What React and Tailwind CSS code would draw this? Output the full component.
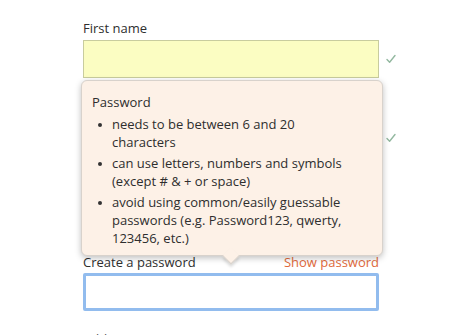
import React from "react";

function Check() {
  return (
    <svg width="12" height="12" viewBox="0 0 12 12" className="absolute -right-[18px] top-1/2 -translate-y-1/2">
      <path d="M2 6.5 L4.6 9.2 L10 2.5" fill="none" stroke="#93b8a0" strokeWidth="1.4" strokeLinecap="round" strokeLinejoin="round" />
    </svg>
  );
}

function Bullet() {
  return (
    <span className="w-[20px] pl-[6px] shrink-0 flex items-start pt-[8px]">
      <span className="block w-[4px] h-[4px] rounded-full bg-[#333]" />
    </span>
  );
}

export default function App() {
  return (
    <div className="w-[474px] h-[335px] overflow-hidden bg-white text-[#2e2e2e] text-[13px]" style={{ fontFamily: "'Open Sans', sans-serif" }}>
      <div className="ml-[83px] w-[296px] pt-[19px]">
        <div className="leading-[18px]">First name</div>
        <div className="relative mt-[3px]">
          <div className="h-[38px] bg-[#fbfdc2] border border-[#c8cc9e]" />
          <Check />
        </div>
        <div className="mt-[20px] h-[18px]" />
        <div className="relative mt-[3px]">
          <div className="h-[38px] bg-[#fbfdc2] border border-[#c8cc9e]" />
          <Check />
        </div>
        <div className="h-[96px]" />
        <div className="relative">
          <div className="absolute top-[-173px] left-[-2px] w-[302px] h-[176px] rounded-[6px] bg-[#fdf1e7] border border-[#d8d2cc] shadow-[0_2px_6px_rgba(0,0,0,0.25)] pl-[10px] pr-[27px] pt-[12px] z-10">
            <div className="leading-[18px]">Password</div>
            <ul className="mt-[4px] flex flex-col gap-[3px]">
              <li className="flex leading-[18px]"><Bullet /><span>needs to be between 6 and 20 characters</span></li>
              <li className="flex leading-[18px]"><Bullet /><span>can use letters, numbers and symbols (except # &amp; + or space)</span></li>
              <li className="flex leading-[18px]"><Bullet /><span>avoid using common/easily guessable passwords (e.g. Password123, qwerty, 123456, etc.)</span></li>
            </ul>
            <div className="absolute left-[143px] bottom-[-7px] w-[12px] h-[12px] rotate-45 bg-[#fdf1e7] border-r border-b border-[#d8d2cc] shadow-[2px_2px_3px_rgba(0,0,0,0.15)]" />
          </div>
          <div className="flex justify-between leading-[18px]">
            <span>Create a password</span>
            <span className="text-[#e0693b]">Show password</span>
          </div>
        </div>
        <div className="mt-[2px] h-[38px] bg-white border-[3px] border-[#92bcee] rounded-[2px]" />
        <div className="mt-[19px] leading-[18px] text-[#555]">Address</div>
      </div>
    </div>
  );
}
